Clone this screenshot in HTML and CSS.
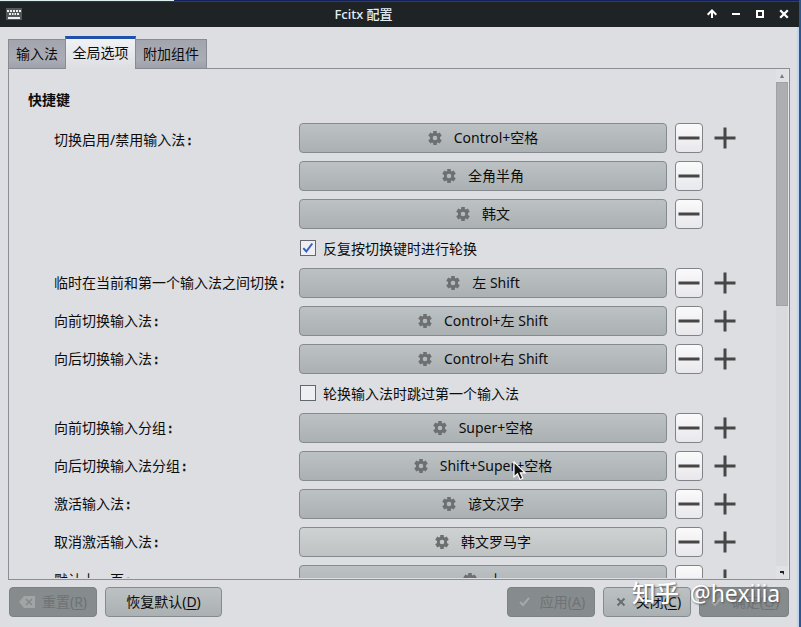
FILE: index.html
```html
<!DOCTYPE html>
<html lang="zh-CN">
<head>
<meta charset="utf-8">
<title>Fcitx 配置</title>
<link rel="stylesheet" href="styles.css">
</head>
<body>
<svg class="defs" width="0" height="0">
  <symbol id="gear" viewBox="0 0 14 14"><path fill="#6c7071" fill-rule="evenodd" d="M5.200 0h3.600v2l1.100.6 1.800-1L13.800 4.700l-1.800 1.200v2.200l1.800 1.200-2.100 3.100-1.800-1-1.100.6v2H5.200v-2l-1.100-.6-1.800 1L.2 9.300 2 8.100V5.900L.2 4.700l2.100-3.100 1.800 1L5.200 2zM7 4.700a2.300 2.300 0 1 0 0 4.600 2.300 2.300 0 0 0 0-4.600z"/></symbol>
  <symbol id="minus" viewBox="0 0 22 22"><path fill="#464646" d="M.5 9.500h21v3H.5z"/></symbol>
  <symbol id="plus" viewBox="0 0 22 22"><path fill="#464646" d="M.5 9.500h9v-9h3v9h9v3h-9v9h-3v-9h-9z"/></symbol>
</svg>
<div class="window">
  <header class="titlebar">
    <svg class="keyboard" width="16" height="12" viewBox="0 0 16 12"><path fill="#53585a" d="M0 0h16v12H0z"/><path fill="#eef0f0" d="M1 2h2v2H1zM4 2h2v2H4zM7 2h2v2H7zM10 2h2v2h-2zM13 2h2v2h-2zM3 5h2v2H3zM6 5h1.500v2H6zM8.500 5H10v2H8.500zM11 5h2v2h-2zM2 9h12v2H2z"/></svg>
    <h1>Fcitx 配置</h1>
    <div class="controls">
      <svg width="12" height="12" viewBox="0 0 12 12"><path fill="none" stroke="#fff" stroke-width="2" d="M6 10V3M1.700 6.700 6 2.400l4.300 4.300"/></svg>
      <svg width="12" height="12" viewBox="0 0 12 12"><path fill="#fff" d="M2 5h8v2H2z"/></svg>
      <svg width="12" height="12" viewBox="0 0 12 12"><path fill="none" stroke="#fff" stroke-width="2" d="M3 3h6v6H3z"/></svg>
      <svg width="12" height="12" viewBox="0 0 12 12"><path fill="none" stroke="#fff" stroke-width="2.300" d="m2.200 2.200 7.600 7.600m0-7.600L2.200 9.800"/></svg>
    </div>
  </header>
  <nav class="tabs">
    <div class="tab first">输入法</div>
    <div class="tab active">全局选项</div>
    <div class="tab last">附加组件</div>
  </nav>
  <main class="pane">
    <section class="content">
      <h2>快捷键</h2>
      <div class="grid">
        <label class="top">切换启用/禁用输入法<i>:</i></label><div class="key"><svg><use href="#gear"/></svg>Control+空格</div><div class="minus"><svg><use href="#minus"/></svg></div><svg class="plus"><use href="#plus"/></svg>
        <div class="key"><svg><use href="#gear"/></svg>全角半角</div><div class="minus"><svg><use href="#minus"/></svg></div>
        <div class="key"><svg><use href="#gear"/></svg>韩文</div><div class="minus"><svg><use href="#minus"/></svg></div>
        <div class="check"><span class="box"><svg width="14" height="14" viewBox="0 0 14 14"><path fill="none" stroke="#3560c0" stroke-width="2" d="m2.300 7.200 3 3.300 6-8"/></svg></span>反复按切换键时进行轮换</div>
        <label>临时在当前和第一个输入法之间切换<i>:</i></label><div class="key"><svg><use href="#gear"/></svg>左 Shift</div><div class="minus"><svg><use href="#minus"/></svg></div><svg class="plus"><use href="#plus"/></svg>
        <label>向前切换输入法<i>:</i></label><div class="key"><svg><use href="#gear"/></svg>Control+左 Shift</div><div class="minus"><svg><use href="#minus"/></svg></div><svg class="plus"><use href="#plus"/></svg>
        <label>向后切换输入法<i>:</i></label><div class="key"><svg><use href="#gear"/></svg>Control+右 Shift</div><div class="minus"><svg><use href="#minus"/></svg></div><svg class="plus"><use href="#plus"/></svg>
        <div class="check"><span class="box"></span>轮换输入法时跳过第一个输入法</div>
        <label>向前切换输入分组<i>:</i></label><div class="key"><svg><use href="#gear"/></svg>Super+空格</div><div class="minus"><svg><use href="#minus"/></svg></div><svg class="plus"><use href="#plus"/></svg>
        <label>向后切换输入法分组<i>:</i></label><div class="key"><svg><use href="#gear"/></svg>Shift+Super+空格</div><div class="minus"><svg><use href="#minus"/></svg></div><svg class="plus"><use href="#plus"/></svg>
        <label>激活输入法<i>:</i></label><div class="key"><svg><use href="#gear"/></svg>谚文汉字</div><div class="minus"><svg><use href="#minus"/></svg></div><svg class="plus"><use href="#plus"/></svg>
        <label>取消激活输入法<i>:</i></label><div class="key hover"><svg><use href="#gear"/></svg>韩文罗马字</div><div class="minus"><svg><use href="#minus"/></svg></div><svg class="plus"><use href="#plus"/></svg>
        <label>默认上一页<i>:</i></label><div class="key"><svg><use href="#gear"/></svg>上</div><div class="minus"><svg><use href="#minus"/></svg></div><svg class="plus"><use href="#plus"/></svg>
      </div>
    </section>
    <div class="scrollbar">
      <div class="arrow"><svg width="6" height="4" viewBox="0 0 6 4"><path fill="#777a7d" d="M3 0 5 4H1z"/></svg></div>
      <div class="thumb"></div>
      <div class="arrow down"><svg width="6" height="4" viewBox="0 0 6 4"><path fill="#222" d="M1 0h4v4L3.500 2H1z"/></svg></div>
    </div>
  </main>
  <footer class="actions">
    <div class="btn disabled"><svg width="16" height="12" viewBox="0 0 16 12"><path fill="#a1a5a6" d="M5 0h11v12H5L0 6z"/><path stroke="#838889" stroke-width="1.500" d="m7 3 6 6m0-6L7 9"/></svg><span>重置(<u>R</u>)</span></div>
    <div class="btn restore"><span>恢复默认(<u>D</u>)</span></div>
    <div class="spacer"></div>
    <div class="btn disabled"><svg width="16" height="12" viewBox="0 0 16 12"><path fill="none" stroke="#a5a9aa" stroke-width="2" d="m3 6 3 3 6-7"/></svg><span>应用(<u>A</u>)</span></div>
    <div class="btn"><svg width="16" height="12" viewBox="0 0 16 12"><path stroke="#696d6e" stroke-width="2" d="m4.500 2.500 7 7m0-7-7 7"/></svg><span>关闭(<u>C</u>)</span></div>
    <div class="btn disabled ok"><svg width="16" height="12" viewBox="0 0 16 12"><path fill="none" stroke="#a5a9aa" stroke-width="2" d="m3 6 3 3 6-7"/></svg><span>确定(<u>O</u>)</span></div>
  </footer>
</div>
<svg class="cursor" width="14" height="21" viewBox="0 0 14 21"><path fill="#111" stroke="#fff" stroke-width="1.200" d="M1 1v15l3.500-3.200L7 18.500l2.800-1.200-2.500-5.500H12z"/></svg>
<div class="watermark"><b>知乎</b> @hexiiia</div>
</body>
</html>
```

FILE: styles.css
```css
* { box-sizing: border-box; }
body {
  margin: 0;
  width: 801px;
  height: 627px;
  overflow: hidden;
  position: relative;
  font: 14px/20px "Noto Sans", "Noto Sans CJK SC", sans-serif;
  color: #0c0c0c;
  background: #2c568b;
}
svg { display: block; flex: none; }
.defs { position: absolute; }
.window {
  width: 799px;
  height: 627px;
  background: #dddee2;
  border-right: 2px solid #bdd5f5;
  display: flex;
  flex-direction: column;
}
.titlebar {
  height: 27px;
  width: 799px;
  flex: none;
  padding: 1px 9px 0 6px;
  background: linear-gradient(90deg, #dceef0 174px, #14205c 174px) 0 0 / 100% 1px no-repeat,
    linear-gradient(90deg, #17404c 174px, #293e76 174px) 0 1px / 100% 1px no-repeat, #1e2326;
  display: grid;
  grid-template-columns: 30px 1fr 84px;
  align-items: center;
}
.titlebar h1 {
  margin: 0 0 0 -15px;
  text-align: center;
  font-size: 13px;
  font-weight: 500;
  color: #e4edf5;
}
.controls { display: flex; gap: 12px; }
.tabs {
  height: 42px;
  padding: 10px 8px 0;
  margin-bottom: -1px;
  display: flex;
  align-items: flex-end;
  z-index: 1;
}
.tab {
  height: 30px;
  padding-top: 4px;
  text-align: center;
  border: 1px solid #888b92;
  background: linear-gradient(#a3a5ae, #abadb6 70%, #9fa1aa);
}
.first { width: 57px; border-right: 0; }
.last { width: 71px; border-left: 0; }
.active {
  width: 71px;
  height: 33px;
  padding-top: 4px;
  border-top: 3px solid #2050aa;
  border-bottom: 0;
  background: linear-gradient(#f1f2f5, #dddee2);
}
.pane {
  height: 512px;
  width: 782px;
  flex: none;
  margin-left: 8px;
  border: 1px solid #8b8e94;
  display: flex;
  overflow: hidden;
}
.content { width: 767px; height: 509px; overflow: hidden; padding: 21px 0 0 19px; }
h2 { margin: 0 0 13px; font-size: 14px; line-height: 20px; font-weight: 700; }
.grid {
  padding-left: 26px;
  display: grid;
  grid-template-columns: 245px 368px 28px 22px;
  column-gap: 0;
  row-gap: 8px;
}
.key { grid-column: 2; }
label { grid-column: 1; height: 30px; padding-top: 5px; white-space: nowrap; }
label.top { padding-top: 7px; }
label i { font: normal 14px/18px "DejaVu Sans Mono", monospace; -webkit-text-stroke: .3px #0c0c0c; }
.key, .btn {
  height: 30px;
  display: flex;
  align-items: center;
  justify-content: center;
  border: 1px solid #858a8e;
  border-radius: 4px;
  background: linear-gradient(#bcc2c4, #abb1b3);
}
.key svg { width: 14px; height: 14px; margin-right: 12px; }
.hover { background: linear-gradient(#cfd2d3, #bec2c3); }
.minus {
  grid-column: 3;
  width: 28px;
  height: 30px;
  margin-left: 8px;
  border: 1px solid #808488;
  border-radius: 4px;
  background: linear-gradient(#fafafb, #e8e8ec);
  display: grid;
  place-items: center;
}
.minus svg, .plus { width: 22px; height: 22px; }
.plus { grid-column: 4; margin: 4px 0 0 19px; }
.check { grid-column: 2 / 5; height: 23px; display: flex; align-items: center; padding-left: 1px; }
.box {
  width: 16px;
  height: 16px;
  margin: 0 7px 2px 0;
  border: 1px solid #64676d;
  background: #efeff3;
}
.scrollbar { width: 13px; height: 510px; display: flex; flex-direction: column; background: #d8dadd; border-right: 1px solid #e7e8eb; }
.arrow { height: 13px; background: #e0e1e4; display: grid; place-items: center; }
.down { margin-top: auto; }
.thumb { height: 224px; background: #adaeb2; border: 1px solid #a0a2a6; }
.actions { display: flex; gap: 8px; padding: 7px 0 0 9px; width: 789px; }
.btn { width: 88px; flex: none; }
.btn svg { margin-right: 7px; }
.btn.restore { width: 117px; }
.btn.ok { width: 90px; }
.btn u { text-underline-offset: 2px; }
.disabled { color: #6e7375; background: #868b8d; border-color: #7c8183; }
.spacer { flex: 1; }
.cursor { position: absolute; left: 513px; top: 461px; }
.watermark {
  position: absolute;
  left: 632px;
  top: 577px;
  font-size: 23px;
  line-height: 32px;
  word-spacing: 5px;
  color: #fff;
  white-space: nowrap;
  text-shadow: 1px 1px 2px #555;
}
.watermark b { font-size: 23.5px; font-weight: 500; }
```
